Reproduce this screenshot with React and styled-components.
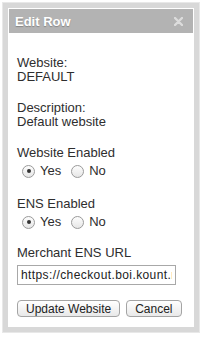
import React from 'react';
import styled, { createGlobalStyle } from 'styled-components';

/**
 * Define styles
 */

const Global = createGlobalStyle`
  body {
    margin: 0;
    background: #fff;
    font-family: "Liberation Sans", Arial, sans-serif;
    color: #2e2e2e;
  }
`

const Dialog = styled.div`
  box-sizing: border-box;
  width: 198px;
  margin: 2px 0 0 2px;
  border: 1px solid #e8e8e8;
`

const Frame = styled.div`
  border: 5px solid #d8d8d8;
  padding: 1px;
  background: #fff;
`

const Header = styled.div`
  height: 24px;
  display: flex;
  align-items: center;
  justify-content: space-between;
  padding: 0 10px 0 6px;
  background: #b3b3b3;
  color: #fff;
  font-size: 13px;
  font-weight: bold;
  text-shadow: 0 1px 1px rgba(0, 0, 0, 0.25);
`

const Close = styled.svg`
  width: 9px;
  height: 9px;
  display: block;
`

const Body = styled.div`
  padding: 23px 8px 9px 8px;
  font-size: 13px;
  line-height: 14px;
`

const Field = styled.div`
  margin-bottom: ${p => p.gap || 17}px;
`

const RadioRow = styled.div`
  display: flex;
  align-items: center;
  height: 18px;
  margin-top: 2px;
  padding-left: 5px;
`

const Radio = styled.span`
  box-sizing: border-box;
  width: 13px;
  height: 13px;
  border-radius: 50%;
  border: 1px solid #9a9a9a;
  background: linear-gradient(#fdfdfd, #e6e6e6);
  display: inline-flex;
  align-items: center;
  justify-content: center;
  margin-right: 5px;
  &::after {
    content: "";
    width: 4px;
    height: 4px;
    border-radius: 50%;
    background: ${p => (p.checked ? '#333' : 'transparent')};
  }
`

const RadioLabel = styled.span`
  margin-right: 10px;
`

const Input = styled.input`
  box-sizing: border-box;
  display: block;
  width: 159px;
  height: 20px;
  margin-top: 5px;
  padding: 0 3px;
  border: 1px solid #a8a8a8;
  font-family: "Liberation Sans", Arial, sans-serif;
  font-size: 12px;
  letter-spacing: 0.4px;
  color: #222;
  outline: none;
`

const Buttons = styled.div`
  display: flex;
  gap: 6px;
  margin-top: 15px;
`

const Button = styled.button`
  box-sizing: border-box;
  height: 17px;
  padding: 0 8px;
  border: 1px solid #a4a4a4;
  border-radius: 4px;
  background: linear-gradient(#ffffff, #e9e9e9);
  font-family: "Liberation Sans", Arial, sans-serif;
  font-size: 12px;
  line-height: 14px;
  color: #222;
`

/**
 * Define component
 */

function RadioGroup() {
  return (
    <RadioRow>
      <Radio checked />
      <RadioLabel>Yes</RadioLabel>
      <Radio />
      <RadioLabel>No</RadioLabel>
    </RadioRow>
  );
}

function App() {
  return (
    <>
      <Global />
      <Dialog>
        <Frame>
          <Header>
            <span>Edit Row</span>
            <Close viewBox="0 0 9 9">
              <path d="M1 1L8 8M8 1L1 8" stroke="#dcdcdc" strokeWidth="2.4" strokeLinecap="round" />
            </Close>
          </Header>
          <Body>
            <Field>
              <div>Website:</div>
              <div>DEFAULT</div>
            </Field>
            <Field>
              <div>Description:</div>
              <div>Default website</div>
            </Field>
            <Field>
              <div>Website Enabled</div>
              <RadioGroup />
            </Field>
            <Field gap={15}>
              <div>ENS Enabled</div>
              <RadioGroup />
            </Field>
            <div>
              <div>Merchant ENS URL</div>
              <Input readOnly value="https://checkout.boi.kount.net/" />
            </div>
            <Buttons>
              <Button>Update Website</Button>
              <Button>Cancel</Button>
            </Buttons>
          </Body>
        </Frame>
      </Dialog>
    </>
  );
}

/**
 * Export component
 */

export default App;
